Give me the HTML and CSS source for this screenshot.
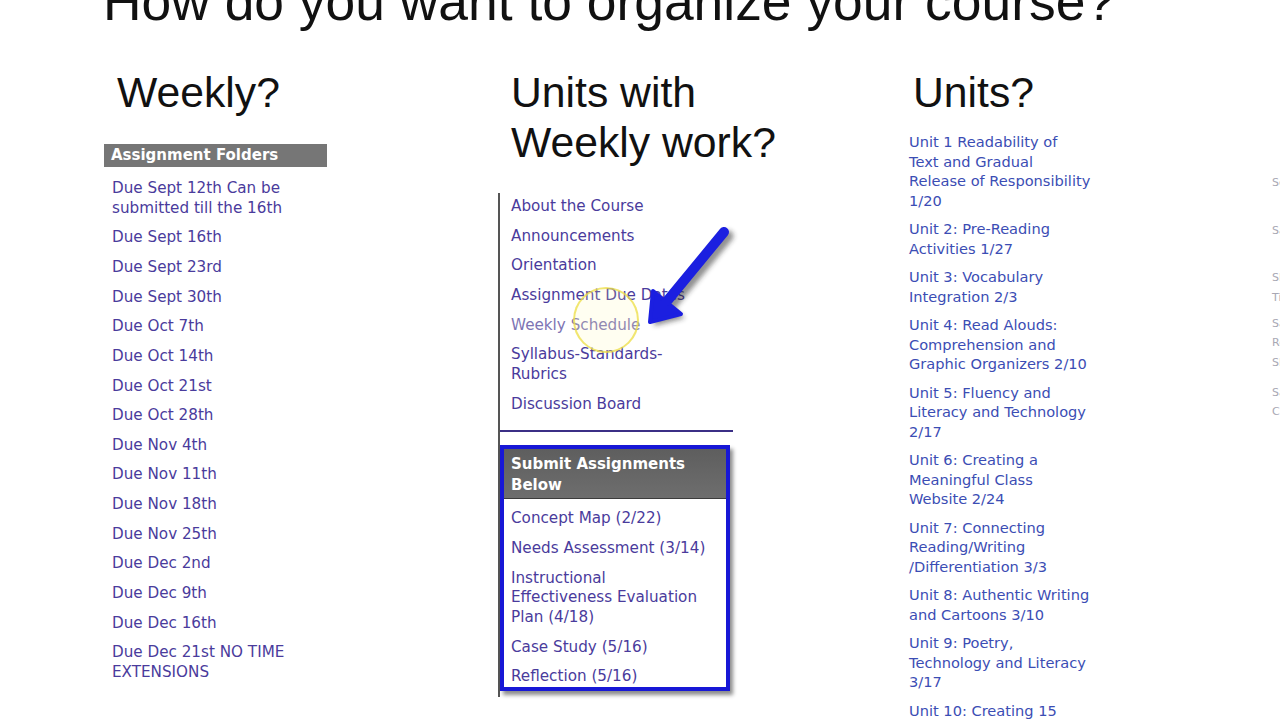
FILE: index.html
```html
<!DOCTYPE html>
<html>
<head>
<meta charset="utf-8">
<link rel="stylesheet" href="styles.css">
</head>
<body>
<div class="slide">
  <h1 class="title">How do you want to organize your course?</h1>
  <div class="cols">
    <section class="col col-weekly">
      <h2 class="heading">Weekly?</h2>
      <div class="folder-head">Assignment Folders</div>
      <ul class="links">
        <li>Due Sept 12th Can be<br>submitted till the 16th</li>
        <li>Due Sept 16th</li>
        <li>Due Sept 23rd</li>
        <li>Due Sept 30th</li>
        <li>Due Oct 7th</li>
        <li>Due Oct 14th</li>
        <li>Due Oct 21st</li>
        <li>Due Oct 28th</li>
        <li>Due Nov 4th</li>
        <li>Due Nov 11th</li>
        <li>Due Nov 18th</li>
        <li>Due Nov 25th</li>
        <li>Due Dec 2nd</li>
        <li>Due Dec 9th</li>
        <li>Due Dec 16th</li>
        <li>Due Dec 21st NO TIME<br>EXTENSIONS</li>
      </ul>
    </section>
    <section class="col col-mixed">
      <h2 class="heading heading-mixed">Units with<br>Weekly work?</h2>
      <div class="menu">
        <ul class="links menu-links">
          <li>About the Course</li>
          <li>Announcements</li>
          <li>Orientation</li>
          <li>Assignment Due Dates</li>
          <li class="faded">Weekly Schedule</li>
          <li>Syllabus-Standards-<br>Rubrics</li>
          <li>Discussion Board</li>
        </ul>
        <div class="menu-rule"></div>
        <div class="submit-box">
          <div class="submit-head">Submit Assignments<br>Below</div>
          <ul class="links submit-links">
            <li>Concept Map (2/22)</li>
            <li>Needs Assessment (3/14)</li>
            <li>Instructional<br>Effectiveness Evaluation<br>Plan (4/18)</li>
            <li>Case Study (5/16)</li>
            <li>Reflection (5/16)</li>
          </ul>
        </div>
      </div>
      <div class="cursor-ring"></div>
      <svg class="pointer" width="140" height="130" viewBox="0 0 140 130">
        <defs>
          <filter id="sh" x="-30%" y="-30%" width="160%" height="160%">
            <feGaussianBlur stdDeviation="2.5"/>
          </filter>
        </defs>
        <g transform="translate(4,4)" opacity="0.5" filter="url(#sh)">
          <path d="M122 12 L66 80" stroke="#222" stroke-width="11" stroke-linecap="round" fill="none"/>
          <path d="M48 102 L51 71 L79 94 Z" fill="#222"/>
        </g>
        <path d="M122 12 L66 80" stroke="#1b1fe0" stroke-width="10" stroke-linecap="round" fill="none"/>
        <path d="M48 102 L51 71 L79 94 Z" fill="#1b1fe0" stroke="#1b1fe0" stroke-width="4" stroke-linejoin="round"/>
      </svg>
    </section>
    <section class="col col-units">
      <h2 class="heading">Units?</h2>
      <ul class="links unit-links">
        <li>Unit 1 Readability of<br>Text and Gradual<br>Release of Responsibility<br>1/20</li>
        <li>Unit 2: Pre-Reading<br>Activities 1/27</li>
        <li>Unit 3: Vocabulary<br>Integration 2/3</li>
        <li>Unit 4: Read Alouds:<br>Comprehension and<br>Graphic Organizers 2/10</li>
        <li>Unit 5: Fluency and<br>Literacy and Technology<br>2/17</li>
        <li>Unit 6: Creating a<br>Meaningful Class<br>Website 2/24</li>
        <li>Unit 7: Connecting<br>Reading/Writing<br>/Differentiation 3/3</li>
        <li>Unit 8: Authentic Writing<br>and Cartoons 3/10</li>
        <li>Unit 9: Poetry,<br>Technology and Literacy<br>3/17</li>
        <li>Unit 10: Creating 15</li>
      </ul>
    </section>
    <section class="col col-edge">
      <ul class="edge-links">
        <li class="e1">Se</li>
        <li class="e2">Sa</li>
        <li class="e3">Sk<br>Ti</li>
        <li class="e4">Sa<br>Ro<br>Sk</li>
        <li class="e5">Sa<br>Ca</li>
      </ul>
    </section>
  </div>
</div>
</body>
</html>
```

FILE: styles.css
```css
html, body {
  margin: 0;
  padding: 0;
  background: #ffffff;
}

body {
  width: 1280px;
  height: 720px;
  overflow: hidden;
  font-family: "Liberation Sans", Arial, sans-serif;
}

.slide {
  padding-left: 103px;
}

.title {
  margin: -28px 0 0 0;
  font-weight: normal;
  font-size: 53.4px;
  line-height: 60px;
  color: #111;
  white-space: nowrap;
}

.cols {
  display: flex;
  margin-top: 35px;
}

.col {
  position: relative;
  flex: none;
}

.col-weekly {
  width: 395px;
}

.col-mixed {
  width: 411px;
}

.col-units {
  width: 362px;
}

.heading {
  margin: 0 0 0 14px;
  font-weight: normal;
  font-size: 42.7px;
  line-height: 50px;
  color: #111;
}

.heading-mixed {
  margin-left: 13px;
}

.col-units .heading {
  margin-left: 4px;
}

.links {
  list-style: none;
  margin: 0;
  padding: 0;
  font-family: "DejaVu Sans", sans-serif;
  font-size: 15.2px;
  line-height: 19.7px;
  color: #4a3b9c;
  display: flex;
  flex-direction: column;
  gap: 9.95px;
  white-space: nowrap;
}

.folder-head {
  margin-top: 27px;
  margin-left: 1px;
  width: 216px;
  height: 23px;
  padding-left: 7px;
  background: #767676;
  color: #fff;
  font-family: "DejaVu Sans", sans-serif;
  font-weight: bold;
  font-size: 15px;
  line-height: 23px;
}

.col-weekly .links {
  margin-top: 12px;
  padding-left: 9px;
}

.menu {
  margin-top: 26px;
  width: 233px;
  border-left: 2px solid #555;
  padding-bottom: 6px;
}

.menu-links {
  padding: 4px 0 0 11px;
}

.menu-links .faded {
  color: #7d74b4;
}

.menu-rule {
  margin-top: 16px;
  height: 2px;
  background: #3b2f86;
}

.submit-box {
  margin-top: 13px;
  width: 222px;
  border: 4px solid #1717d6;
  box-shadow: 3px 4px 4px rgba(0, 0, 0, 0.45);
  background: #fff;
}

.submit-head {
  padding: 5px 8px 2px 7px;
  background: linear-gradient(#5e5e5e, #6e6e6e);
  border-bottom: 1px solid #3c3c3c;
  color: #fff;
  font-family: "DejaVu Sans", sans-serif;
  font-weight: bold;
  font-size: 15px;
  line-height: 21px;
}

.submit-links {
  padding: 10px 0 0 7px;
}

.pointer {
  position: absolute;
  left: 104px;
  top: 153px;
}

.cursor-ring {
  position: absolute;
  left: 75px;
  top: 220px;
  width: 62px;
  height: 62px;
  border-radius: 50%;
  border: 2px solid rgba(236, 222, 70, 0.75);
  background: rgba(255, 250, 170, 0.16);
}

.col-units .links {
  margin-top: 15px;
  color: #3b4db4;
  font-size: 14.6px;
  line-height: 19.5px;
  gap: 9px;
}

.edge-links {
  list-style: none;
  margin: 106px 0 0 1px;
  padding: 0;
  font-family: "DejaVu Sans", sans-serif;
  font-size: 11px;
  line-height: 19.5px;
  color: #a8a8b4;
}

.edge-links .e2 {
  margin-top: 28.5px;
}

.edge-links .e3 {
  margin-top: 27.5px;
}

.edge-links .e4 {
  margin-top: 6.5px;
}

.edge-links .e5 {
  margin-top: 10.5px;
}
```
